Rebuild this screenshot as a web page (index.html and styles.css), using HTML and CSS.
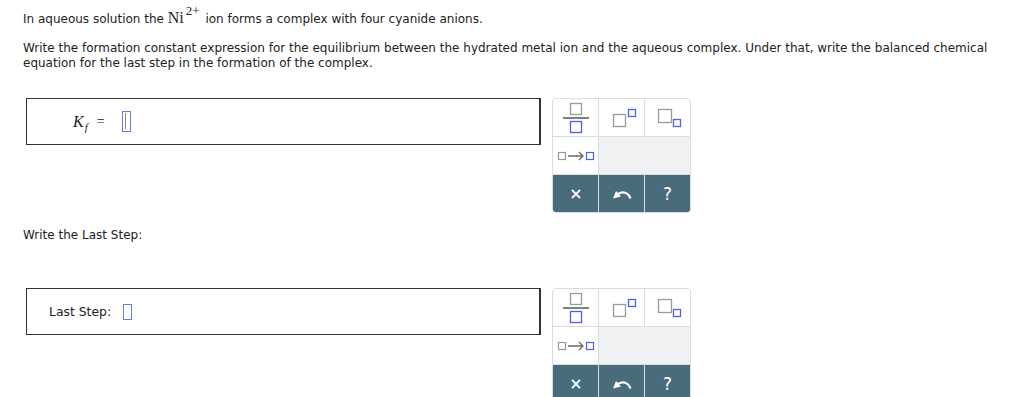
FILE: index.html
```html
<!DOCTYPE html>
<html>
<head>
<meta charset="utf-8">
<link rel="stylesheet" href="styles.css">
</head>
<body>
<div class="page">
  <p class="q1">In aqueous solution the <span class="chem">Ni<sup>2+</sup></span> ion forms a complex with four cyanide anions.</p>
  <p class="q2">Write the formation constant expression for the equilibrium between the hydrated metal ion and the aqueous complex. Under that, write the balanced chemical equation for the last step in the formation of the complex.</p>

  <div class="row row1">
    <div class="answer kf">
      <span class="math">K<sub>f</sub></span>
      <span class="eq">=</span>
      <span class="cursor tall"></span>
    </div>
    <div class="palette">
      <div class="cell"><svg width="30" height="32" viewBox="0 0 30 32"><rect x="9.5" y="1.5" width="11" height="11" fill="none" stroke="#9a9a9a" stroke-width="1.3"/><line x1="2" y1="16" x2="28" y2="16" stroke="#555" stroke-width="1.3"/><rect x="9.5" y="19.5" width="11" height="11" fill="none" stroke="#4d5ef0" stroke-width="1.3"/></svg></div>
      <div class="cell"><svg width="30" height="24" viewBox="0 0 30 24"><rect x="6.5" y="8.5" width="12" height="12" fill="none" stroke="#9a9a9a" stroke-width="1.3"/><rect x="21.5" y="3.5" width="7" height="7" fill="none" stroke="#4d5ef0" stroke-width="1.3"/></svg></div>
      <div class="cell"><svg width="30" height="24" viewBox="0 0 30 24"><rect x="5.5" y="3.5" width="13" height="13" fill="none" stroke="#9a9a9a" stroke-width="1.3"/><rect x="20.5" y="13.5" width="7" height="7" fill="none" stroke="#4d5ef0" stroke-width="1.3"/></svg></div>
      <div class="cell"><svg width="38" height="14" viewBox="0 0 38 14"><rect x="1.5" y="3.5" width="7" height="7" fill="none" stroke="#9a9a9a" stroke-width="1.2"/><line x1="11" y1="7" x2="26" y2="7" stroke="#666" stroke-width="1.3"/><path d="M22 3 L26 7 L22 11" fill="none" stroke="#666" stroke-width="1.3"/><rect x="29.5" y="3.5" width="7" height="7" fill="none" stroke="#4d5ef0" stroke-width="1.2"/></svg></div>
      <div class="cell blank"></div>
      <div class="btn"><svg width="12" height="12" viewBox="0 0 12 12"><path d="M2 2 L10 10 M10 2 L2 10" stroke="#fff" stroke-width="1.8"/></svg></div>
      <div class="btn"><svg width="20" height="12" viewBox="0 0 20 12"><path d="M18.5 10.5 C16 4 11 3 6 6" fill="none" stroke="#fff" stroke-width="2.2"/><path d="M1 10.5 L4 3 L9 8.5 Z" fill="#fff"/></svg></div>
      <div class="btn q">?</div>
    </div>
  </div>

  <p class="last">Write the Last Step:</p>

  <div class="row row2">
    <div class="answer ls">
      <span class="label">Last Step:</span>
      <span class="cursor"></span>
    </div>
    <div class="palette">
      <div class="cell"><svg width="30" height="32" viewBox="0 0 30 32"><rect x="9.5" y="1.5" width="11" height="11" fill="none" stroke="#9a9a9a" stroke-width="1.3"/><line x1="2" y1="16" x2="28" y2="16" stroke="#555" stroke-width="1.3"/><rect x="9.5" y="19.5" width="11" height="11" fill="none" stroke="#4d5ef0" stroke-width="1.3"/></svg></div>
      <div class="cell"><svg width="30" height="24" viewBox="0 0 30 24"><rect x="6.5" y="8.5" width="12" height="12" fill="none" stroke="#9a9a9a" stroke-width="1.3"/><rect x="21.5" y="3.5" width="7" height="7" fill="none" stroke="#4d5ef0" stroke-width="1.3"/></svg></div>
      <div class="cell"><svg width="30" height="24" viewBox="0 0 30 24"><rect x="5.5" y="3.5" width="13" height="13" fill="none" stroke="#9a9a9a" stroke-width="1.3"/><rect x="20.5" y="13.5" width="7" height="7" fill="none" stroke="#4d5ef0" stroke-width="1.3"/></svg></div>
      <div class="cell"><svg width="38" height="14" viewBox="0 0 38 14"><rect x="1.5" y="3.5" width="7" height="7" fill="none" stroke="#9a9a9a" stroke-width="1.2"/><line x1="11" y1="7" x2="26" y2="7" stroke="#666" stroke-width="1.3"/><path d="M22 3 L26 7 L22 11" fill="none" stroke="#666" stroke-width="1.3"/><rect x="29.5" y="3.5" width="7" height="7" fill="none" stroke="#4d5ef0" stroke-width="1.2"/></svg></div>
      <div class="cell blank"></div>
      <div class="btn"><svg width="12" height="12" viewBox="0 0 12 12"><path d="M2 2 L10 10 M10 2 L2 10" stroke="#fff" stroke-width="1.8"/></svg></div>
      <div class="btn"><svg width="20" height="12" viewBox="0 0 20 12"><path d="M18.5 10.5 C16 4 11 3 6 6" fill="none" stroke="#fff" stroke-width="2.2"/><path d="M1 10.5 L4 3 L9 8.5 Z" fill="#fff"/></svg></div>
      <div class="btn q">?</div>
    </div>
  </div>
</div>
</body>
</html>
```
FILE: styles.css
```css
html, body {
  margin: 0;
  padding: 0;
  background: #fff;
}
body {
  font-family: "DejaVu Sans", Verdana, sans-serif;
  font-size: 12px;
  color: #222;
}
.page {
  padding: 10px 0 0 23px;
  width: 980px;
}
p {
  margin: 0;
  line-height: 15px;
}
.q1 {
  line-height: 16px;
}
.chem {
  font-family: "Liberation Serif", "Times New Roman", serif;
  font-size: 16px;
  margin-right: 2px;
}
.chem sup {
  font-size: 13px;
  vertical-align: 8px;
  line-height: 0;
  margin-left: 2px;
}
.q2 {
  margin-top: 14px;
}
.row {
  display: flex;
  align-items: flex-start;
  gap: 11px;
  margin-left: 3px;
}
.row1 {
  margin-top: 27px;
}
.last {
  margin-top: 15px;
}
.row2 {
  margin-top: 45px;
}
.answer {
  box-sizing: border-box;
  width: 515px;
  height: 47px;
  border: 1px solid #333;
  border-right-width: 2px;
  display: flex;
  align-items: center;
}
.kf {
  padding-left: 46px;
}
.ls {
  padding-left: 22px;
  font-size: 12.4px;
}
.math {
  font-family: "Liberation Serif", "Times New Roman", serif;
  font-style: italic;
  font-size: 16px;
}
.math sub {
  font-size: 11px;
  vertical-align: -4px;
  line-height: 0;
  margin-left: 1px;
}
.eq {
  font-family: "Liberation Serif", serif;
  font-size: 14px;
  margin-left: 9px;
}
.cursor {
  display: inline-block;
  box-sizing: border-box;
  width: 9px;
  height: 16px;
  border: 1.5px solid #6a78ee;
  margin-left: 12px;
}
.cursor.tall {
  height: 21px;
  margin-left: 17px;
  position: relative;
}
.cursor.tall::after {
  content: "";
  position: absolute;
  left: 2px;
  top: 1px;
  width: 1px;
  height: 16px;
  background: #888;
}
.palette {
  display: grid;
  grid-template-columns: 45px 45px 45px;
  grid-template-rows: 37px 37px 37px;
  gap: 1px;
  background: #d9dde0;
  border: 1px solid #d9dde0;
  border-radius: 4px;
  overflow: hidden;
}
.cell {
  background: #fff;
  display: flex;
  align-items: center;
  justify-content: center;
}
.cell.blank {
  grid-column: span 2;
  background: #eff1f2;
}
.btn {
  background: #496c7a;
  display: flex;
  align-items: center;
  justify-content: center;
  color: #fff;
}
.btn.q {
  font-family: "DejaVu Sans", sans-serif;
  font-size: 17px;
}
```
